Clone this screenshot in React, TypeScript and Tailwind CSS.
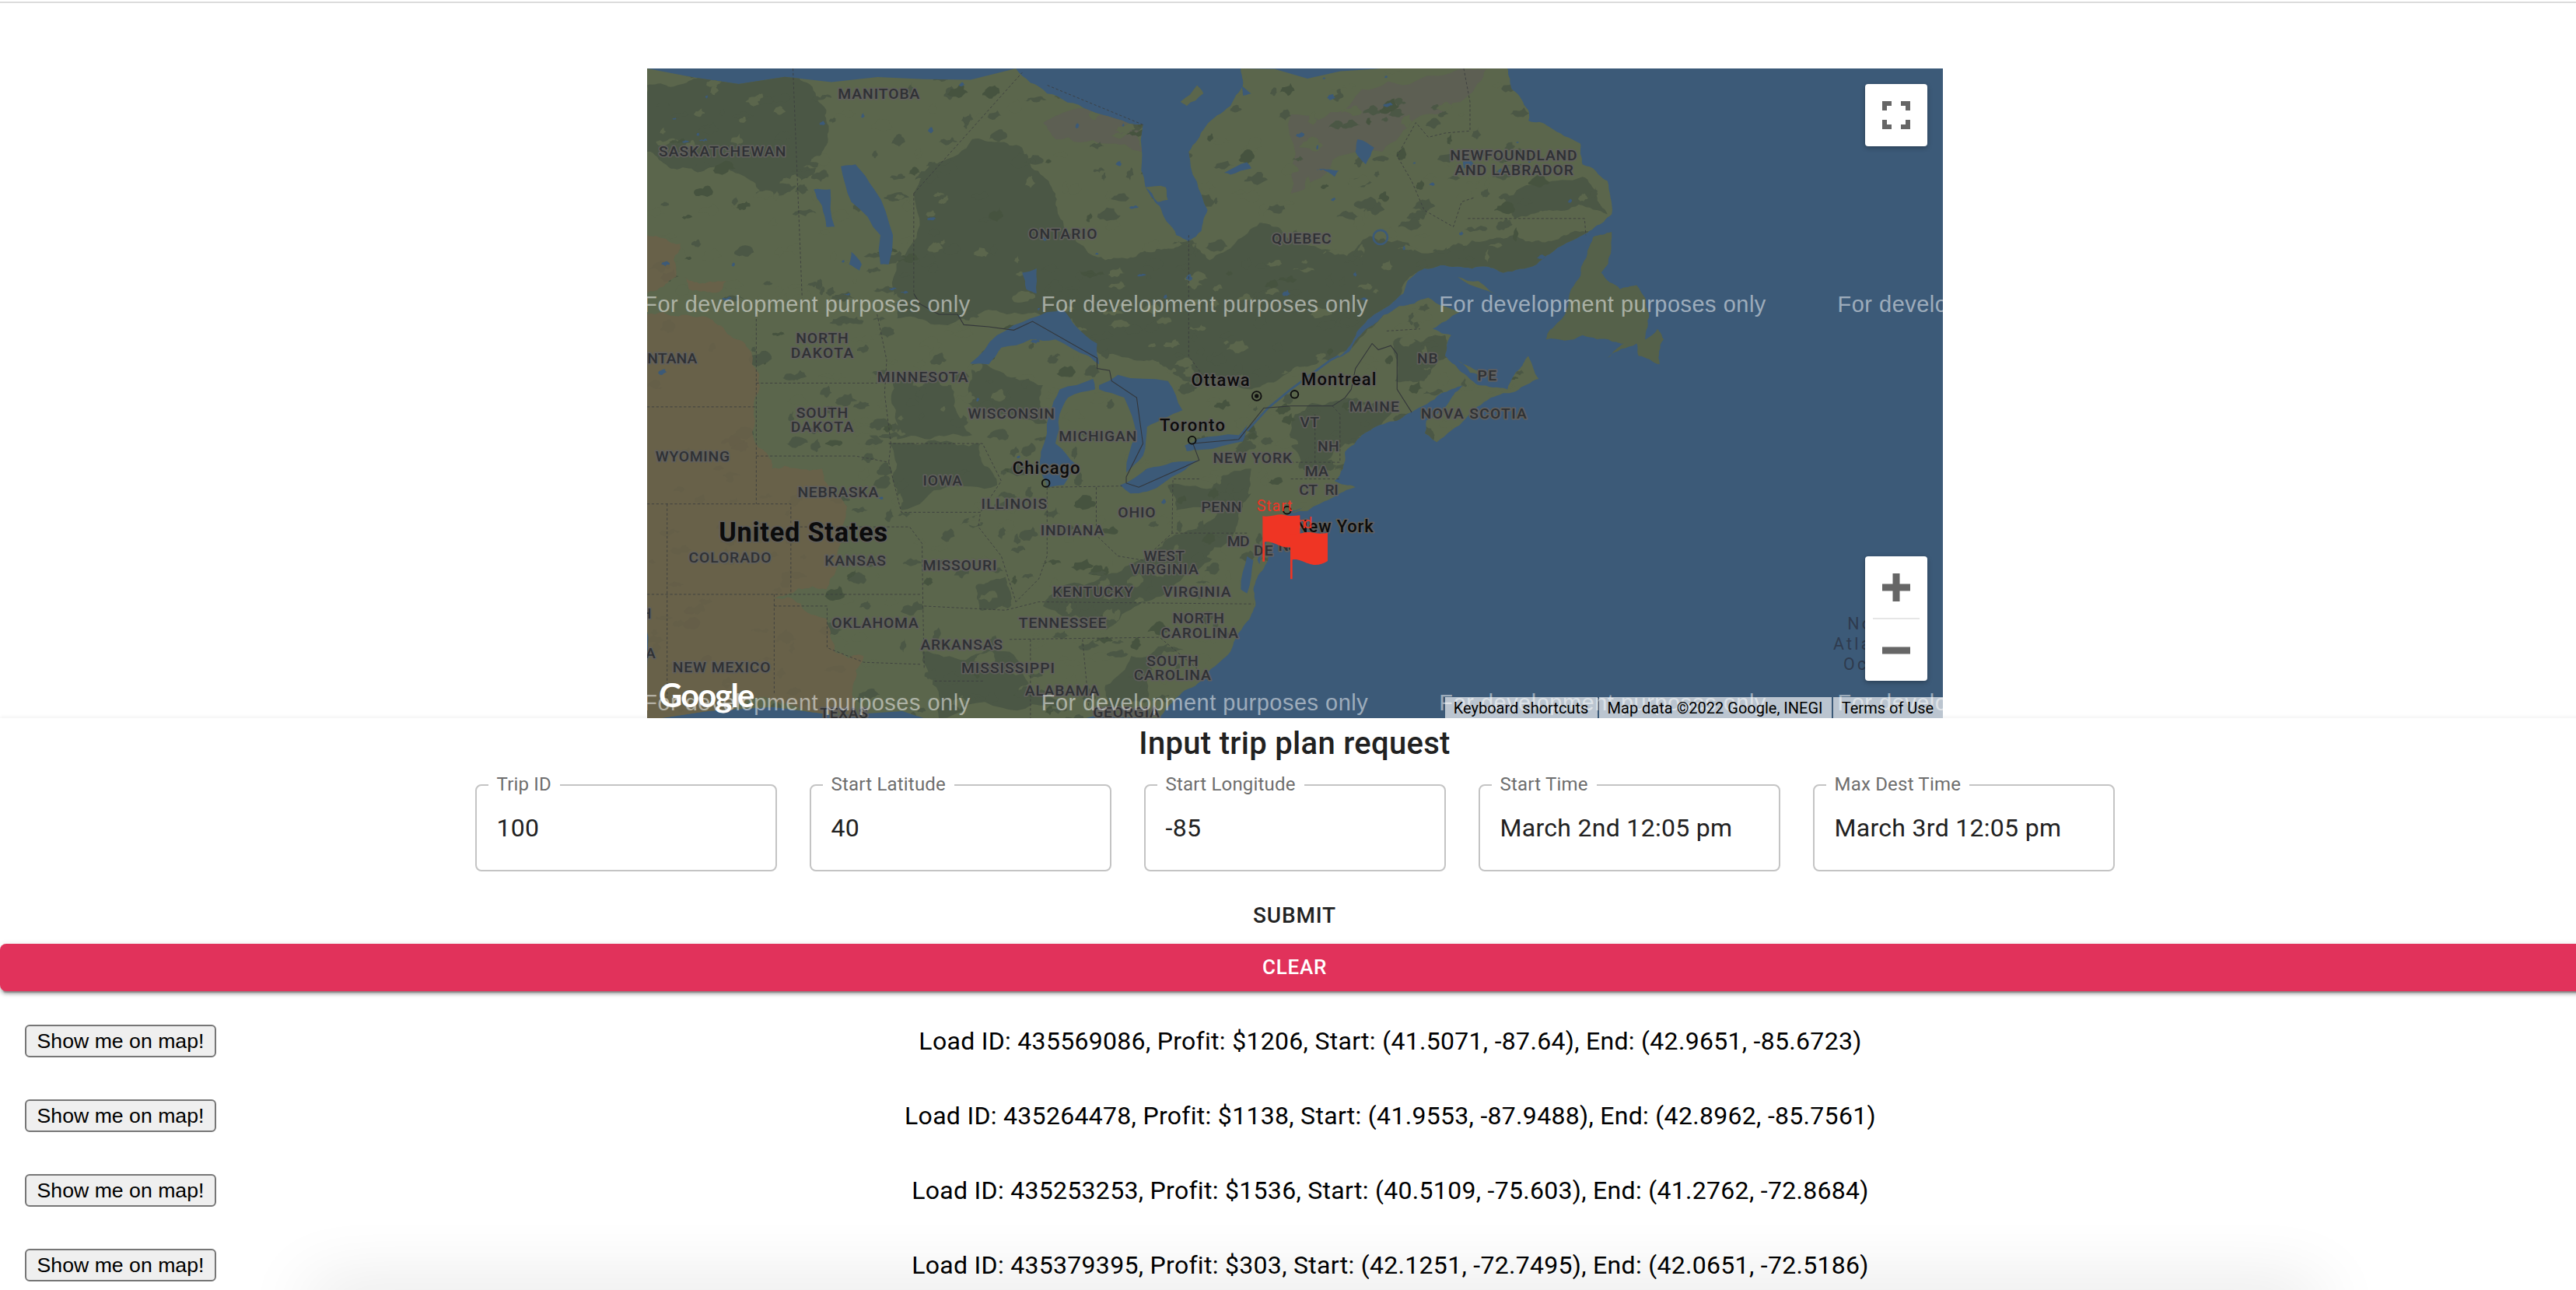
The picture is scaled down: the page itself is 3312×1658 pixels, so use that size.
import React from "react";

const E = 1545;
type P = [number, number];
const east = (a: P[]): P[] => a.map(([x, y]) => [x + E, y] as P);
const pts = (a: P[]) => a.map((p) => p.map((n) => Math.round(n * 10) / 10).join(",")).join(" ");
const line = (a: P[]) => "M" + a.map((p) => p.join(" ")).join("L");

let seed = 987654;
const rnd = () => ((seed = (seed * 16807) % 2147483647) / 2147483647);
function rough(a: P[], amp: number, iter = 3): P[] {
  let cur = a;
  for (let k = 0; k < iter; k++) {
    const next: P[] = [];
    cur.forEach((p, i) => {
      const q = cur[(i + 1) % cur.length];
      const dx = q[0] - p[0], dy = q[1] - p[1];
      const t = (rnd() - 0.5) * amp;
      next.push(p, [(p[0] + q[0]) / 2 - dy * t, (p[1] + q[1]) / 2 + dx * t]);
    });
    cur = next;
  }
  return cur;
}

const LAND: P[] = [
  [0, 0], [885, 0], [960, 60], [1060, 100], [1190, 135], [1195, 280], [1230, 330], [1270, 400], [1300, 415], [1330, 390],
  [1345, 340], [1300, 200], [1340, 140], [1400, 90], [1430, 40], [1425, 0],
  ...east([[520, 0], [530, 50], [570, 100], [570, 125], [620, 140], [695, 180], [700, 230], [760, 270], [770, 350], [730, 380], [700, 400], [640, 430], [590, 470], [510, 490], [470, 475], [400, 475], [320, 480], [280, 510], [270, 540], [200, 590], [150, 650], [110, 695], [140, 680], [190, 620], [260, 570], [330, 550], [405, 585], [340, 625], [385, 640], [370, 690], [405, 725], [450, 760], [520, 770], [550, 720], [570, 690], [595, 745], [540, 775], [480, 790], [420, 840], [350, 897], [322, 875], [325, 845], [380, 800], [415, 760], [360, 780], [290, 825], [230, 850], [170, 880], [130, 920], [125, 960], [105, 990], [155, 1005], [100, 1030], [0, 1062]]),
  [1505, 1100], [1490, 1180], [1480, 1200], [1455, 1250], [1460, 1290], [1430, 1340], [1400, 1400], [1330, 1470], [1270, 1510], [1230, 1559], [-5, 1565], [-5, -5],
];
const NFLD: P[] = east([[770, 392], [725, 405], [700, 470], [680, 520], [640, 610], [612, 650], [700, 640], [770, 655], [800, 660], [760, 695], [830, 660], [835, 690], [885, 710], [895, 650], [880, 625], [850, 650], [860, 590], [830, 520], [790, 530], [745, 490]]);

const FOREST: P[][] = [
  [[590, 530], [640, 300], [780, 170], [900, 190], [980, 300], [1020, 400], [1100, 460], [1200, 430], [1290, 420], [1350, 460], [1470, 370], [1545, 400], [1680, 450], [1750, 400], [1950, 430], [2080, 400], [2200, 400], [2290, 385], [2270, 440], [2130, 490], [1950, 490], [1830, 500], [1760, 600], [1640, 700], [1550, 720], [1450, 770], [1290, 750], [1250, 720], [1200, 700], [1080, 680], [1020, 600], [900, 590], [760, 600], [600, 600]],
  [[0, 40], [100, 30], [200, 0], [350, 0], [430, 100], [420, 200], [350, 290], [280, 300], [180, 230], [100, 240], [0, 200]],
  [[1000, 1240], [1180, 1180], [1330, 1100], [1450, 1020], [1400, 1130], [1250, 1250], [1100, 1350], [950, 1290]],
  [[780, 710], [950, 760], [960, 850], [850, 830], [760, 800]],
  [[1555, 830], [1645, 800], [1795, 800], [1785, 830], [1675, 900], [1565, 960]],
  [[790, 1240], [860, 1220], [870, 1290], [800, 1300]],
  [[660, 1400], [870, 1400], [1000, 1540], [700, 1559]],
  [[1100, 1480], [1250, 1380], [1200, 1520], [1100, 1559]],
  [[1795, 650], [1915, 640], [1925, 690], [1865, 750], [1795, 750]],
  [[2055, 310], [2245, 260], [2305, 350], [2165, 340], [2085, 360]],
  [[580, 900], [800, 900], [840, 1000], [610, 1060]],
  [[590, 750], [730, 760], [780, 880], [600, 890]],
  [[1250, 1000], [1450, 960], [1430, 1030], [1270, 1060]],
  [[1790, 840], [1840, 830], [1890, 880], [1880, 900], [1820, 880]],
];
const TAN: P[][] = [
  [[0, 590], [150, 600], [250, 680], [260, 900], [300, 960], [420, 960], [480, 1050], [430, 1250], [300, 1270], [430, 1320], [450, 1400], [520, 1410], [500, 1559], [0, 1559]],
  [[0, 400], [80, 420], [70, 500], [0, 540]],
  [[90, 500], [190, 510], [180, 530], [100, 530]],
];
const GRAYL: P[][] = [
  [[1545, 110], [1675, 100], [1715, 50], [1845, 30], [1955, 0], [2015, 0], [1965, 70], [1845, 120], [1765, 200], [1645, 220], [1545, 300]],
  [[950, 130], [1180, 130], [1190, 200], [1100, 180], [980, 170]],
];
const WATER: P[][] = [
  [[775, 708], [840, 640], [920, 600], [1000, 580], [1030, 620], [1080, 660], [1085, 710], [1060, 690], [980, 650], [920, 650], [850, 670], [820, 710]],
  [[945, 920], [965, 830], [990, 770], [1070, 745], [1075, 770], [1010, 790], [990, 830], [980, 900], [1030, 950], [1000, 1000], [960, 1005], [945, 960]],
  [[1085, 760], [1130, 735], [1250, 750], [1285, 820], [1240, 840], [1200, 860], [1190, 930], [1150, 970], [1175, 880], [1145, 790], [1085, 770]],
  [[1135, 1000], [1200, 960], [1260, 945], [1325, 940], [1280, 970], [1200, 1015], [1160, 1020]],
  [[1290, 905], [1320, 890], [1420, 880], [1440, 855], [1430, 895], [1330, 915], [1295, 918]],
  [[465, 235], [500, 230], [545, 290], [590, 400], [580, 470], [560, 470], [560, 400], [490, 320]],
  [[400, 290], [440, 290], [450, 380], [430, 380], [420, 330]],
  [[900, 490], [935, 480], [935, 540], [910, 530]],
  [[490, 440], [515, 470], [510, 485], [485, 470]],
  [[1385, 250], [1440, 225], [1450, 240], [1400, 255]],
  [[1425, 40], [1450, 60], [1430, 65]],
  [[1705, 170], [1745, 190], [1725, 230], [1700, 200]],
  [[1620, 240], [1660, 245], [1650, 260]],
  [[1955, 200], [1985, 230], [1960, 240]],
  [[1440, 1170], [1455, 1180], [1440, 1260], [1425, 1250]],
  [[1480, 1120], [1490, 1130], [1470, 1190], [1465, 1180]],
];
const ISLANDS: P[][] = [
  east([[400, 500], [450, 510], [510, 555], [460, 530]]),
  east([[400, 700], [430, 730], [470, 745], [440, 722]]),
  [[1280, 80], [1320, 40], [1335, 60], [1295, 90]],
  [[1195, 285], [1245, 285], [1250, 315], [1225, 320]],
  east([[0, 1066], [60, 1045], [100, 1035], [40, 1062]]),
];
const SOLID: P[][] = [
  [[640, 540], [655, 565], [700, 590], [745, 590], [760, 615], [820, 620], [880, 628], [925, 607], [1080, 695], [1080, 720], [1110, 725], [1115, 750], [1175, 790], [1190, 900], [1150, 980], [1150, 995], [1180, 1005], [1325, 940], [1310, 900], [1420, 890], [1480, 815], [1545, 810], [1645, 810], [1675, 790], [1690, 770], [1700, 720], [1740, 660], [1755, 675], [1785, 665], [1800, 685], [1800, 770], [1835, 825]],
];
const DASHED: P[][] = [
  [[350, 0], [372, 550]], [[640, 300], [640, 540]], [[640, 300], [900, 10]], [[262, 590], [262, 1045]], [[0, 812], [262, 812]], [[262, 755], [552, 755]], [[552, 590], [575, 700], [570, 780], [585, 900], [580, 945]],
  [[262, 930], [500, 930], [580, 945], [610, 1065], [800, 1065], [795, 1100], [850, 1170], [885, 1280]],
  [[580, 900], [805, 900], [850, 990], [800, 1065]], [[0, 1045], [345, 1045], [345, 1262]], [[345, 1100], [630, 1100], [660, 1140], [662, 1290], [665, 1440]],
  [[0, 1262], [660, 1262]], [[48, 1045], [48, 1510]], [[305, 1262], [305, 1500]], [[305, 1290], [432, 1290], [432, 1390], [520, 1425], [660, 1430]],
  [[960, 1005], [960, 1170], [940, 1225], [885, 1280]], [[1078, 1005], [1078, 1120], [1130, 1170], [1190, 1180], [1260, 1115], [1440, 1115]],
  [[960, 1005], [1140, 1002]], [[1260, 1115], [1262, 985], [1325, 985]], [[665, 1290], [860, 1300], [940, 1280], [1455, 1285]], [[870, 1370], [1230, 1365], [1320, 1440]], [[1045, 1370], [1060, 1530]], [[920, 1370], [920, 1559]], [[690, 1470], [810, 1470]],
  [[1300, 400], [1300, 690], [1350, 760]], [[1190, 135], [960, 40]],
  east([[415, 0], [430, 80], [430, 150], [370, 155], [330, 165], [300, 130], [255, 210], [290, 270], [320, 340], [390, 380], [410, 320], [440, 310]]),
  east([[425, 360], [705, 360], [708, 400]]), east([[230, 630], [310, 625]]), east([[100, 810], [118, 830], [118, 945], [0, 945]]), east([[58, 830], [58, 945]]), east([[0, 985], [120, 985]]),
];

type L = [string, number, number, number];
const LABELS: L[] = [
  ["MANITOBA", 458, 73, 196], ["SASKATCHEWAN", 28, 211, 305], ["ONTARIO", 915, 408, 165], ["QUEBEC", 1499, 421, 143],
  ["NEWFOUNDLAND", 1927, 221, 305], ["AND LABRADOR", 1938, 255, 285], ["MONTANA", -56, 708, 176], ["NORTH", 357, 660, 126], ["DAKOTA", 345, 694, 150],
  ["MINNESOTA", 552, 752, 218], ["SOUTH", 358, 838, 124], ["DAKOTA", 345, 871, 150], ["WISCONSIN", 770, 841, 208], ["MICHIGAN", 988, 895, 187],
  ["WYOMING", 20, 943, 178], ["IOWA", 662, 1000, 94], ["NEBRASKA", 361, 1028, 194], ["ILLINOIS", 802, 1056, 158], ["OHIO", 1130, 1078, 90], ["PENN", 1330, 1065, 97],
  ["INDIANA", 944, 1121, 152], ["NEW YORK", 1358, 947, 190], ["COLORADO", 100, 1185, 198], ["KANSAS", 426, 1194, 147], ["MISSOURI", 662, 1205, 177],
  ["WEST", 1192, 1181, 98], ["VIRGINIA", 1160, 1214, 163], ["KENTUCKY", 973, 1267, 194], ["VIRGINIA", 1238, 1267, 163], ["MD", 1392, 1146, 54], ["DE", 1456, 1168, 46], ["NJ", 1515, 1158, 44],
  ["OKLAHOMA", 443, 1343, 208], ["TENNESSEE", 892, 1343, 210], ["NORTH", 1261, 1332, 124], ["CAROLINA", 1233, 1366, 186], ["ARKANSAS", 656, 1395, 197],
  ["MISSISSIPPI", 754, 1450, 224], ["SOUTH", 1199, 1434, 124], ["CAROLINA", 1168, 1468, 185], ["ALABAMA", 907, 1505, 178], ["NEW MEXICO", 61, 1448, 235],
  ["TEXAS", 415, 1559, 115], ["GEORGIA", 1070, 1558, 160], ["UTAH", -70, 1320, 80], ["ARIZONA", -150, 1415, 170],
  ["VT", 1567, 860, 46], ["NH", 1609, 919, 52], ["MA", 1579, 979, 56], ["CT", 1565, 1024, 44], ["RI", 1627, 1024, 32], ["MAINE", 1685, 824, 120], ["NB", 1848, 708, 50], ["PE", 1993, 749, 46], ["NOVA SCOTIA", 1857, 841, 254],
];
const CITIES: L[] = [
  ["Ottawa", 1306, 762, 140], ["Montreal", 1570, 760, 180], ["Toronto", 1230, 870, 157], ["Chicago", 877, 973, 162], ["New York", 1557, 1113, 186],
];
const DOTS: P[] = [[1554, 782], [1308, 892], [957, 995], [1536, 1060]];

const LAND_R = rough(LAND, 0.16, 3);
const NFLD_R = rough(NFLD, 0.22, 3);
const FOREST_R = FOREST.map((a) => rough(a, 0.3, 4));
const TAN_R = TAN.map((a) => rough(a, 0.3, 4));
const GRAY_R = GRAYL.map((a) => rough(a, 0.3, 3));
const WATER_R = WATER.map((a) => rough(a, 0.14, 2));
const ISL_R = ISLANDS.map((a) => rough(a, 0.2, 2));

function blob(x: number, y: number, a: number, b: number): P[] {
  return rough([[x, y], [x + a, y - b * 0.5], [x + a * 1.5, y + b * 0.4], [x + a * 0.7, y + b], [x - a * 0.3, y + b * 0.6]], 0.5, 2);
}
const DARK = "#4b5745", LIGHT = "#5b664c", DEEP = "#46533f";
const BLOBS: { p: P[]; c: string }[] = [];
for (let i = 0; i < 1100; i++) {
  const x = rnd() * 2350, y = rnd() * 1559, a = 6 + rnd() * 26, b = 5 + rnd() * 18;
  const v = rnd();
  BLOBS.push({ p: blob(x, y, a, b), c: v < 0.48 ? DARK : v < 0.9 ? LIGHT : DEEP });
}
const LAKES: P[][] = [];
for (let i = 0; i < 60; i++) {
  const north = i % 6 !== 0;
  const x = rnd() * 2250, y = north ? rnd() * 560 : 560 + rnd() * 500;
  LAKES.push(blob(x, y, 3 + rnd() * 10, 2 + rnd() * 8));
}
const WATERC = "#3c5a78";
const WM_X = [-9, 946, 1901, 2857];
const halo = { stroke: "#605f5c", strokeWidth: 6, paintOrder: "stroke" as const, strokeLinejoin: "round" as const };

function MapDrawing() {
  return (
    <svg viewBox="0 0 3110 1559" preserveAspectRatio="none" className="block h-full w-full font-['Roboto',sans-serif]">
      <defs>
        <clipPath id="land"><polygon points={pts(LAND_R)} /></clipPath>
      </defs>
      <rect width="3110" height="1559" fill={WATERC} />
      <polygon points={pts(LAND_R)} fill="#5b664c" />
      <polygon points={pts(NFLD_R)} fill="#55614a" />
      <g clipPath="url(#land)">
        {GRAY_R.map((a, i) => <polygon key={i} points={pts(a)} fill="#5d5f53" />)}
        {FOREST_R.map((a, i) => <polygon key={i} points={pts(a)} fill={DARK} />)}
        {BLOBS.map((b, i) => <polygon key={i} points={pts(b.p)} fill={b.c} />)}
        {TAN_R.map((a, i) => <polygon key={i} points={pts(a)} fill="#6a6149" opacity="0.86" />)}
        {LAKES.map((a, i) => <polygon key={i} points={pts(a)} fill={WATERC} />)}
        <path d={line([[1440, 870], [1490, 815], [1545, 770], [1640, 700], [1660, 690]])} stroke={WATERC} strokeWidth="5" fill="none" />
        <circle cx={E + 215} cy={405} r={17} fill="none" stroke={WATERC} strokeWidth="5" />
        {WATER_R.map((a, i) => <polygon key={i} points={pts(a)} fill={WATERC} />)}
      </g>
      {ISL_R.map((a, i) => <polygon key={i} points={pts(a)} fill="#5b664c" />)}
      {DASHED.map((a, i) => <path key={i} d={line(a)} fill="none" stroke="#3a3d3e" strokeWidth="1.6" strokeDasharray="6 5" />)}
      {SOLID.map((a, i) => <path key={i} d={line(a)} fill="none" stroke="#33363a" strokeWidth="2" />)}
      {LABELS.map(([t, x, y, w], i) => (
        <text key={i} x={x} y={y} textLength={w} lengthAdjust="spacing" fontSize="36" fontWeight="500" fill="#2f3134" {...halo}>{t}</text>
      ))}
      {["North", "Atlantic", "Ocean"].map((t, i) => (
        <text key={t} x={E + [1336, 1302, 1326][i]} y={[1347, 1395, 1444][i]} fontSize="40" letterSpacing="6" fill="#2f3b4e">{t}</text>
      ))}
      {DOTS.map(([x, y], i) => <circle key={i} cx={x} cy={y} r="9" fill="#5b664c" fillOpacity="0.4" stroke="#0c0c0c" strokeWidth="3.5" />)}
      <circle cx="1463" cy="786" r="11" fill="none" stroke="#111" strokeWidth="3.5" />
      <circle cx="1463" cy="786" r="5" fill="#111" />
      {CITIES.map(([t, x, y, w], i) => (
        <text key={i} x={x} y={y} textLength={w} lengthAdjust="spacing" fontSize="41" fontWeight="500" fill="#0c0c0c" {...halo}>{t}</text>
      ))}
      <text x="172" y="1135" textLength="405" lengthAdjust="spacing" fontSize="64" fontWeight="700" fill="#0c0c0c" {...halo}>United States</text>
      <g transform="translate(1247 956) scale(0.6222)">
        <text x="347" y="170" textLength="138" lengthAdjust="spacing" fontSize="59" fill="#ef3524">Start</text>
        <text x="478" y="238" textLength="84" lengthAdjust="spacing" fontSize="59" fill="#ef3524">End</text>
        <path d="M370 190C400 195 430 180 450 185C470 190 490 190 514 187L514 295C490 310 465 315 440 305C415 295 395 285 378 290L378 365L370 365Z" fill="#ef3524" />
        <path transform="translate(107 68)" d="M370 190C400 195 430 180 450 185C470 190 490 190 514 187L514 295C490 310 465 315 440 305C415 295 395 285 378 290L378 365L370 365Z" fill="#ef3524" />
      </g>
      {[585, 1541].map((y) =>
        WM_X.map((x) => (
          <text key={`${x}-${y}`} x={x} y={y} textLength="784" lengthAdjust="spacing" fontSize="54" fontFamily="'Liberation Sans',sans-serif" fill="#ffffff" fillOpacity="0.5">For development purposes only</text>
        ))
      )}
      <text x="28" y="1532" textLength="230" lengthAdjust="spacing" fontSize="78" fontWeight="700" fontFamily="Lato,sans-serif" fill="#ffffff">Google</text>
    </svg>
  );
}

function Field({ label, value }: { label: string; value: string }) {
  return (
    <div className="relative flex h-[112px] w-[388px] items-center rounded-[8px] border-2 border-[#c4c4c4] bg-white pl-[26px] text-[32px] tracking-[0.3px] text-[#212121]">
      <span className="absolute left-[15px] top-[-16px] bg-white px-[11px] text-[24px] leading-[28px] tracking-[0.2px] text-[#6e6e6e]">{label}</span>
      {value}
    </div>
  );
}

const FIELDS = [
  ["Trip ID", "100"],
  ["Start Latitude", "40"],
  ["Start Longitude", "-85"],
  ["Start Time", "March 2nd 12:05 pm"],
  ["Max Dest Time", "March 3rd 12:05 pm"],
];
const ROWS = [
  "Load ID: 435569086, Profit: $1206, Start: (41.5071, -87.64), End: (42.9651, -85.6723)",
  "Load ID: 435264478, Profit: $1138, Start: (41.9553, -87.9488), End: (42.8962, -85.7561)",
  "Load ID: 435253253, Profit: $1536, Start: (40.5109, -75.603), End: (41.2762, -72.8684)",
  "Load ID: 435379395, Profit: $303, Start: (42.1251, -72.7495), End: (42.0651, -72.5186)",
];

export default function App() {
  return (
    <div className="relative h-[1658px] w-full overflow-hidden bg-white font-['Roboto',sans-serif]">
      <div className="w-[3329px]">
        <div className="mt-[2px] h-[2px] bg-[#dcdcdc]" />
        <div className="relative z-10 pt-[84px]">
          <div className="relative mx-auto h-[835px] w-[1666px] overflow-hidden">
            <MapDrawing />
            <div className="absolute right-[20px] top-[20px] flex h-[80px] w-[80px] items-center justify-center rounded-[4px] bg-white shadow-[0_2px_6px_rgba(0,0,0,0.3)]">
              <svg width="36" height="36" viewBox="0 0 36 36" fill="#666666">
                <path d="M0 0h12v6H6v6H0zM24 0h12v12h-6V6h-6zM0 24h6v6h6v6H0zM30 24h6v12H24v-6h6z" />
              </svg>
            </div>
            <div className="absolute bottom-[48px] right-[20px] flex h-[160px] w-[80px] flex-col items-center rounded-[4px] bg-white shadow-[0_2px_6px_rgba(0,0,0,0.3)]">
              <div className="flex h-[79px] items-center">
                <svg width="36" height="36" viewBox="0 0 36 36" fill="#666666"><path d="M13.5 0h9v13.5H36v9H22.5V36h-9V22.5H0v-9h13.5z" /></svg>
              </div>
              <div className="h-[2px] w-[60px] bg-[#e6e6e6]" />
              <div className="flex h-[79px] items-center">
                <svg width="36" height="36" viewBox="0 0 36 36" fill="#666666"><path d="M0 13.5h36v9H0z" /></svg>
              </div>
            </div>
            <div className="absolute bottom-0 right-0 flex h-[27px] gap-[2px] text-[20px] leading-[29px] text-black">
              <span className="w-[196px] bg-white/65 text-center">Keyboard shortcuts</span>
              <span className="w-[299px] bg-white/65 text-center">Map data ©2022 Google, INEGI</span>
              <span className="w-[141px] bg-white/65 text-center">Terms of Use</span>
            </div>
          </div>
        </div>
        <div className="bg-white shadow-[0_-2px_4px_rgba(0,0,0,0.05)]">
          <h6 className="h-[64px] text-center text-[40px] font-medium leading-[66px] tracking-[0.3px] text-[#212121]">Input trip plan request</h6>
          <div className="mt-[21px] flex justify-center gap-[42px]">
            {FIELDS.map(([l, v]) => <Field key={l} label={l} value={v} />)}
          </div>
          <button className="mt-[20px] block h-[73px] w-full text-center text-[28px] font-medium uppercase tracking-[0.8px] text-[#212121]">Submit</button>
          <button className="block h-[61px] w-full rounded-[8px] bg-[#e1325b] text-center text-[26px] font-medium uppercase tracking-[0.75px] text-white shadow-[0_6px_2px_-4px_rgba(0,0,0,0.3),0_4px_4px_rgba(0,0,0,0.2),0_2px_10px_rgba(0,0,0,0.12)]">Clear</button>
          <div className="mt-[16px]">
            {ROWS.map((t) => (
              <div key={t} className="flex h-[96px] items-center px-[32px]">
                <button className="h-[42px] w-[246px] shrink-0 rounded-[6px] border-2 border-[#767676] bg-[#efefef] text-center font-['Liberation_Sans',sans-serif] text-[26.67px] leading-[34px] text-black">Show me on map!</button>
                <p className="flex-1 text-center text-[32px] tracking-[0.3px] text-black">{t}</p>
              </div>
            ))}
          </div>
        </div>
      </div>
      <div className="absolute left-[400px] top-[1658px] h-[40px] w-[2580px] shadow-[0_0_90px_0_rgba(0,0,0,0.16)]" />
    </div>
  );
}
